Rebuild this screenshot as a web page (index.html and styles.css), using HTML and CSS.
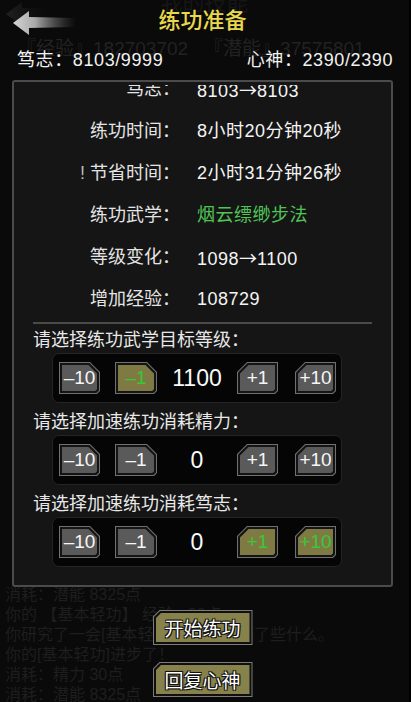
FILE: index.html
```html
<!DOCTYPE html>
<html lang="zh">
<head>
<meta charset="utf-8">
<title>练功准备</title>
<link rel="stylesheet" href="styles.css">
</head>
<body>
<div class="screen">
  <div class="bg">
    <div class="bg-title">我的技能</div>
    <div class="bg-stats"><span>『经验』182703702</span><span>『潜能』37575801</span></div>
    <div class="bg-log">
      <div>消耗：潜能 8325点</div>
      <div>你的 【基本轻功】 经验+ 30点</div>
      <div>你研究了一会[基本轻功]，似乎领悟了些什么。</div>
      <div>你的[基本轻功]进步了！</div>
      <div>消耗：精力 30点</div>
      <div>消耗：潜能 8325点</div>
    </div>
  </div>

  <div class="overlay">
    <header class="top">
      <svg class="back" viewBox="0 0 80 42" aria-hidden="true">
        <defs>
          <linearGradient id="ag" x1="13" y1="0" x2="76" y2="0" gradientUnits="userSpaceOnUse">
            <stop offset="0" stop-color="#d4d4d4"/>
            <stop offset="0.35" stop-color="#a9a9a9"/>
            <stop offset="1" stop-color="#5a5a5a" stop-opacity="0"/>
          </linearGradient>
          <linearGradient id="sg" x1="5" y1="0" x2="50" y2="0" gradientUnits="userSpaceOnUse">
            <stop offset="0" stop-color="#222"/>
            <stop offset="1" stop-color="#111" stop-opacity="0"/>
          </linearGradient>
        </defs>
        <path d="M6,14 L22,2 L22,8 L60,9 L60,18 L22,19 L22,26 Z" fill="url(#sg)"/>
        <path d="M13,23 L29,11 L29,17 L76,18 L76,27 L29,28 L29,35 Z" fill="url(#ag)"/>
      </svg>
      <h1 class="title">练功准备</h1>
      <span></span>
    </header>

    <div class="stats"><span>笃志：8103/9999</span><span>心神：2390/2390</span></div>

    <section class="panel">
      <div class="scroll">
        <div class="rows">
          <div class="row"><span class="k">笃志：</span><span class="v">8103<span class="arw">→</span>8103</span></div>
          <div class="row"><span class="k">练功时间：</span><span class="v">8小时20分钟20秒</span></div>
          <div class="row"><span class="k"><span class="warn">!</span>节省时间：</span><span class="v">2小时31分钟26秒</span></div>
          <div class="row"><span class="k">练功武学：</span><span class="v green">烟云缥缈步法</span></div>
          <div class="row"><span class="k">等级变化：</span><span class="v">1098<span class="arw">→</span>1100</span></div>
          <div class="row"><span class="k">增加经验：</span><span class="v">108729</span></div>
        </div>
        <div class="sep"></div>

        <div class="sec">
          <div class="sec-label">请选择练功武学目标等级：</div>
          <div class="stepper">
            <div class="btn minus m10"><div class="ring"><div class="fill">–10</div></div></div>
            <div class="btn minus m1 on"><div class="ring"><div class="fill">–1</div></div></div>
            <div class="val">1100</div>
            <div class="btn plus p1"><div class="ring"><div class="fill">+1</div></div></div>
            <div class="btn plus p10"><div class="ring"><div class="fill">+10</div></div></div>
          </div>
        </div>

        <div class="sec">
          <div class="sec-label">请选择加速练功消耗精力：</div>
          <div class="stepper">
            <div class="btn minus m10"><div class="ring"><div class="fill">–10</div></div></div>
            <div class="btn minus m1"><div class="ring"><div class="fill">–1</div></div></div>
            <div class="val">0</div>
            <div class="btn plus p1"><div class="ring"><div class="fill">+1</div></div></div>
            <div class="btn plus p10"><div class="ring"><div class="fill">+10</div></div></div>
          </div>
        </div>

        <div class="sec">
          <div class="sec-label">请选择加速练功消耗笃志：</div>
          <div class="stepper">
            <div class="btn minus m10"><div class="ring"><div class="fill">–10</div></div></div>
            <div class="btn minus m1"><div class="ring"><div class="fill">–1</div></div></div>
            <div class="val">0</div>
            <div class="btn plus p1 on"><div class="ring"><div class="fill">+1</div></div></div>
            <div class="btn plus p10 on"><div class="ring"><div class="fill">+10</div></div></div>
          </div>
        </div>
      </div>
    </section>

    <div class="actions">
      <div class="act"><div class="ring"><div class="fill">开始练功</div></div></div>
      <div class="act"><div class="ring"><div class="fill">回复心神</div></div></div>
    </div>
  </div>
</div>
</body>
</html>
```

FILE: styles.css
```css
html, body {
  margin: 0;
  padding: 0;
  background: #000;
}

body {
  font-family: "Liberation Sans", "Noto Sans CJK SC", sans-serif;
}

.screen {
  position: relative;
  width: 411px;
  height: 702px;
  overflow: hidden;
}

/* faded page underneath the dialog */
.bg {
  width: 409px;
  height: 702px;
  background: #0a0a0a;
  display: flex;
  flex-direction: column;
}

.bg-title {
  margin-top: -8px;
  font-size: 22px;
  line-height: 22px;
  text-align: center;
  color: #161616;
}

.bg-stats {
  margin-top: 23px;
  padding-left: 17px;
  display: flex;
  gap: 16px;
  font-size: 19px;
  line-height: 24px;
  color: #222;
}

.bg-log {
  margin-top: auto;
  margin-bottom: -3px;
  padding-left: 5px;
  font-size: 16px;
  line-height: 20px;
  color: #1e1e1e;
  white-space: nowrap;
}

/* dialog layer */
.overlay {
  position: absolute;
  top: 0;
  left: 0;
  width: 405px;
  height: 702px;
  display: flex;
  flex-direction: column;
}

.top {
  height: 42px;
  display: grid;
  grid-template-columns: 1fr auto 1fr;
  align-items: center;
}

.back {
  display: block;
  width: 80px;
  height: 42px;
}

.title {
  margin: 0;
  font-size: 22px;
  font-weight: 500;
  line-height: 42px;
  color: #e9d84b;
}

.stats {
  margin-top: 8px;
  height: 20px;
  padding: 0 12px 0 17px;
  display: flex;
  justify-content: space-between;
  font-size: 18px;
  line-height: 20px;
  letter-spacing: 0.6px;
  color: #f2f2f2;
  white-space: nowrap;
}

.panel {
  margin: 10px 12px 0;
  height: 507px;
  box-sizing: border-box;
  padding-top: 3px;
  border: 2px solid #4b4b4b;
  border-radius: 3px;
  background: #151515;
  overflow: hidden;
}

.scroll {
  height: 100%;
  overflow: hidden;
}

.rows {
  margin-top: -17px;
}

.row {
  display: grid;
  grid-template-columns: 166px 1fr;
  column-gap: 17px;
  height: 42px;
  line-height: 42px;
  font-size: 18px;
  color: #e4e4e4;
  white-space: nowrap;
}

.k {
  text-align: right;
}

.v {
  color: #f4f4f4;
  letter-spacing: 0.5px;
}

.arw {
  font-family: "Noto Sans CJK SC", sans-serif;
  letter-spacing: 0;
}

.v.green {
  color: #50c456;
}

.warn {
  color: #bdbdbd;
  margin-right: 5px;
}

.sep {
  height: 2px;
  margin: 2px 19px 0;
  background: #4a4a4a;
}

.sec {
  margin-top: 7px;
}

.sep + .sec {
  margin-top: 4px;
}

.sec-label {
  padding-left: 19px;
  font-size: 18px;
  line-height: 24px;
  color: #e8e8e8;
}

.stepper {
  margin: 1px 0 0 38px;
  width: 290px;
  height: 50px;
  box-sizing: border-box;
  padding: 0 5px 0 6px;
  border: 1px solid #242424;
  border-radius: 7px;
  background: #050505;
  display: flex;
  align-items: center;
}

.val {
  flex: 1;
  text-align: center;
  font-size: 23px;
  color: #fafafa;
}

/* chamfered step buttons */
.btn {
  --c: 10px;
  --d: 3px;
  width: 41px;
  height: 32px;
  box-sizing: border-box;
  padding: 1px;
  background: #707070;
}

.btn .ring {
  --c: 9.4px;
  --d: 2.6px;
  height: 100%;
  box-sizing: border-box;
  padding: 2px;
  background: #141414;
}

.btn .fill {
  --c: 8.6px;
  --d: 1.8px;
  height: 100%;
  background: #5a5a5a;
  display: flex;
  align-items: center;
  justify-content: center;
  font-size: 19px;
  color: #f6f6f6;
}

.minus,
.minus .ring,
.minus .fill {
  clip-path: polygon(0 0, calc(100% - var(--c)) 0, 100% var(--c), 100% calc(100% - var(--d)), calc(100% - var(--d)) 100%, 0 100%);
}

.plus,
.plus .ring,
.plus .fill {
  clip-path: polygon(var(--c) 0, 100% 0, 100% calc(100% - var(--d)), calc(100% - var(--d)) 100%, 0 100%, 0 var(--c));
}

.m10 {
  margin-right: 15px;
}

.m1 {
  width: 42px;
}

.p1 {
  margin-right: 17px;
}

.btn.on .fill {
  background: #7f7a43;
  color: #36c936;
}

/* bottom action buttons */
.actions {
  margin-top: 23px;
  display: flex;
  flex-direction: column;
  align-items: center;
  gap: 17px;
}

.act {
  --c: 7px;
  width: 100px;
  height: 35px;
  box-sizing: border-box;
  padding: 1px;
  background: #7b7b7b;
}

.act .ring {
  --c: 6.5px;
  height: 100%;
  box-sizing: border-box;
  padding: 2px;
  background: #0f0f0f;
}

.act .fill {
  --c: 5.5px;
  height: 100%;
  background: #87824b;
  display: flex;
  align-items: center;
  justify-content: center;
  font-size: 19px;
  color: #fff;
  text-shadow: 1px 1px 0 #111, -1px -1px 0 #111, 1px -1px 0 #111, -1px 1px 0 #111, 0 0 2px #000;
}

.act,
.act .ring,
.act .fill {
  clip-path: polygon(var(--c) 0, 100% 0, 100% 100%, 0 100%, 0 var(--c));
}
```
